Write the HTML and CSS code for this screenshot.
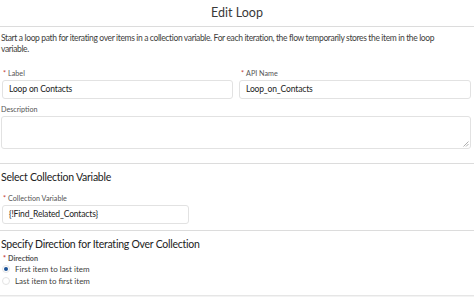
FILE: index.html
```html
<!DOCTYPE html>
<html>
<head>
<meta charset="utf-8">
<link rel="stylesheet" href="styles.css">
</head>
<body>
<div class="modal">
  <header class="modal-header"><h1 class="title">Edit Loop</h1></header>
  <div class="modal-body">
    <p class="intro">Start a loop path for iterating over items in a collection variable. For each iteration, the flow temporarily stores the item in the loop variable.</p>
    <div class="row-2">
      <div class="field">
        <label class="label"><span class="req">*</span>Label</label>
        <div class="input">Loop on Contacts</div>
      </div>
      <div class="field">
        <label class="label"><span class="req">*</span>API Name</label>
        <div class="input">Loop_on_Contacts</div>
      </div>
    </div>
    <div class="field">
      <label class="label">Description</label>
      <div class="textarea">
        <svg class="grip" width="6" height="6" viewBox="0 0 6 6"><path d="M5.5 0.5 L0.5 5.5 M5.5 3 L3 5.5" stroke="#9a9a9a" stroke-width="0.8" fill="none"/></svg>
      </div>
    </div>
  </div>
  <section class="section">
    <h2 class="section-title">Select Collection Variable</h2>
    <div class="field">
      <label class="label"><span class="req">*</span>Collection Variable</label>
      <div class="input input-narrow">{!Find_Related_Contacts}</div>
    </div>
  </section>
  <section class="section section-last">
    <h2 class="section-title">Specify Direction for Iterating Over Collection</h2>
    <div class="label label-bold"><span class="req">*</span>Direction</div>
    <div class="radio-row"><span class="radio checked"></span>First item to last item</div>
    <div class="radio-row"><span class="radio"></span>Last item to first item</div>
  </section>
  <div class="footer-band"></div>
</div>
</body>
</html>
```
FILE: styles.css
```css
html, body {
  margin: 0;
  padding: 0;
  background: #ffffff;
}
body {
  font-family: "Lato", "Open Sans", sans-serif;
  color: #3e3e3c;
  width: 474px;
  height: 297px;
  overflow: hidden;
}
.modal {
  display: flex;
  flex-direction: column;
}
.modal-header {
  height: 27px;
  border-bottom: 1px solid #dcdcdc;
  display: flex;
  align-items: center;
  justify-content: center;
  box-sizing: border-box;
}
.title {
  margin: 0;
  font-size: 12.5px;
  font-weight: 400;
  color: #3a3a3a;
  line-height: 1;
  padding-top: 1px;
}
.modal-body {
  padding: 6px 3px 0 1px;
}
.intro {
  margin: 0;
  max-width: 442px;
  font-size: 8.5px;
  letter-spacing: -0.36px;
  line-height: 11px;
  color: #3e3e3c;
}
.row-2 {
  display: grid;
  grid-template-columns: 1fr 1fr;
  column-gap: 6px;
  margin-top: 14px;
}
.field {
  display: flex;
  flex-direction: column;
}
.label {
  font-size: 7.2px;
  line-height: 9px;
  color: #555;
  padding-left: 2px;
  margin-bottom: 2px;
}
.req {
  color: #c23934;
  margin-right: 2px;
}
.input {
  height: 19px;
  border: 1px solid #e2e2e2;
  border-radius: 3px;
  box-sizing: border-box;
  font-size: 8.5px;
  letter-spacing: -0.15px;
  line-height: 17px;
  padding-left: 6px;
  color: #222;
}
.row-2 .field:first-child .input { margin-left: 1px; }
.row-2 + .field { margin-top: 6px; }
.row-2 + .field .label { padding-left: 0; }
.textarea {
  height: 33px;
  border: 1px solid #e2e2e2;
  border-radius: 3px;
  box-sizing: border-box;
  position: relative;
}
.grip {
  position: absolute;
  right: 1px;
  bottom: 1px;
}
.section {
  border-top: 1px solid #dcdcdc;
  margin-top: 14px;
  padding: 6px 3px 6px 1px;
}
.section-title {
  margin: 0 0 10px 0;
  font-size: 10.5px;
  letter-spacing: -0.25px;
  font-weight: 400;
  line-height: 14px;
  color: #222;
}
.input-narrow {
  width: 187px;
  margin-left: 1px;
}
.section-last {
  margin-top: 0;
  padding-bottom: 0;
  height: 65px;
  box-sizing: border-box;
}
.section-last .section-title { margin-bottom: 3px; }
.label-bold {
  font-weight: 700;
  margin-bottom: 0;
}
.radio-row {
  display: flex;
  align-items: center;
  font-size: 8px;
  height: 12px;
  color: #3e3e3c;
}
.radio {
  width: 8px;
  height: 8px;
  border-radius: 50%;
  border: 1px solid #e4e4e4;
  box-sizing: border-box;
  margin-right: 5px;
  margin-left: 1px;
  display: inline-flex;
  align-items: center;
  justify-content: center;
  background: #fff;
}
.radio.checked::after {
  content: "";
  width: 4px;
  height: 4px;
  border-radius: 50%;
  background: #1b5297;
}
.footer-band {
  border-top: 1px solid #e6e6e6;
  height: 10px;
  background: #f3f3f3;
}
```
